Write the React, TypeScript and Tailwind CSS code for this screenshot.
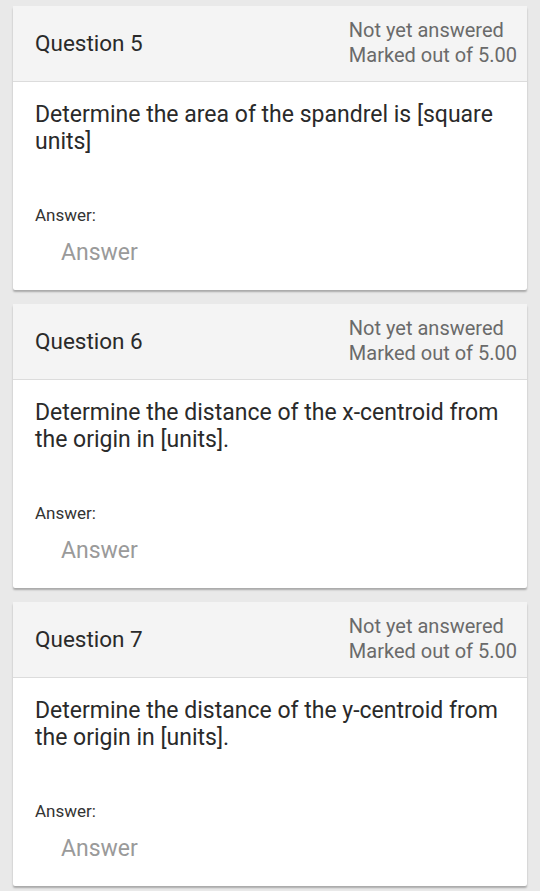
const questions = [
  { n: 5, text: 'Determine the area of the spandrel is [square units]' },
  { n: 6, text: 'Determine the distance of the x-centroid from the origin in [units].' },
  { n: 7, text: 'Determine the distance of the y-centroid from the origin in [units].' },
];

function QuestionCard({ n, text }: { n: number; text: string }) {
  return (
    <div className="bg-white rounded-[2px] shadow-[0_2px_2px_rgba(0,0,0,0.28)] h-[284px] flex flex-col">
      <div className="h-[76px] bg-[#f4f4f4] border-b border-[#dcdcdc] flex items-center justify-between pl-[22px] pr-[10px]">
        <div className="text-[22.5px] text-[#2a2a2a]">Question {n}</div>
        <div className="text-left text-[20px] leading-[25px] text-[#6a6a6a] mb-[2px]">
          <div>Not yet answered</div>
          <div>Marked out of 5.00</div>
        </div>
      </div>
      <div className="px-[22px] pt-[19px]">
        <p className="text-[23px] leading-[27px] text-[#2a2a2a]">{text}</p>
        <div className="mt-[50px] text-[17px] leading-[20px] text-[#333]">Answer:</div>
        <div className="mt-[14px] ml-[26px] text-[23px] leading-[28px] text-[#9a9a9a]">Answer</div>
      </div>
    </div>
  );
}

export default function App() {
  return (
    <div
      className="min-h-[891px] bg-[#e9e9e9] px-[13px] pt-[6px] flex flex-col gap-[14px]"
      style={{ fontFamily: 'Roboto, "Liberation Sans", sans-serif' }}
    >
      {questions.map((q) => (
        <QuestionCard key={q.n} n={q.n} text={q.text} />
      ))}
    </div>
  );
}
